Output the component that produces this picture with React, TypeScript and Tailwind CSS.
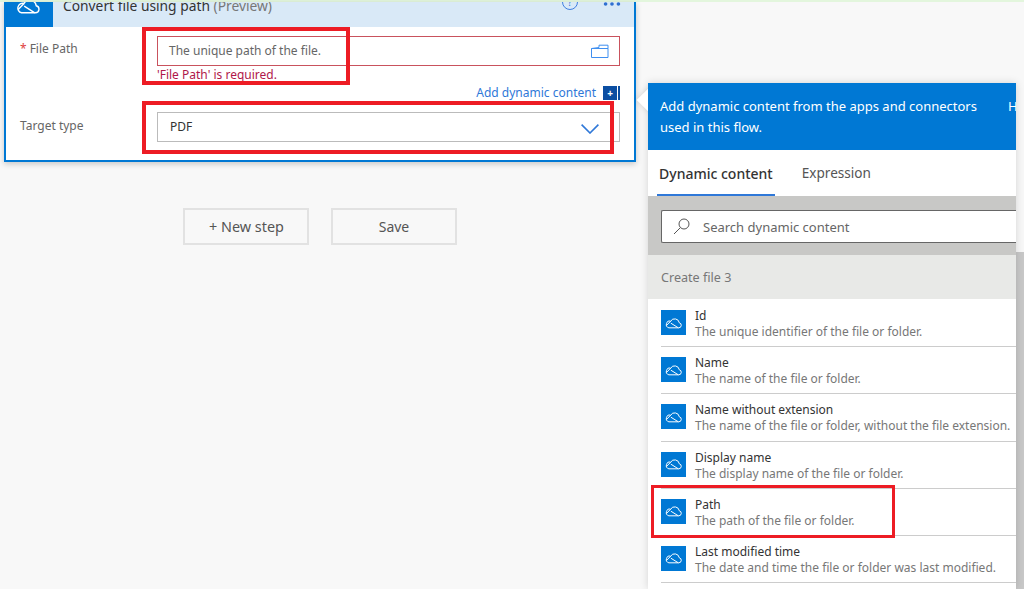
import React from "react";
import { Ellipsis } from "lucide-react";

const fields = [
	{ name: "Id", desc: "The unique identifier of the file or folder." },
	{ name: "Name", desc: "The name of the file or folder." },
	{ name: "Name without extension", desc: "The name of the file or folder, without the file extension." },
	{ name: "Display name", desc: "The display name of the file or folder." },
	{ name: "Path", desc: "The path of the file or folder." },
	{ name: "Last modified time", desc: "The date and time the file or folder was last modified." },
];

const CloudIcon: React.FC<{ className?: string }> = ({ className }) => (
	<svg viewBox="0 0 24 16" fill="none" stroke="white" strokeWidth="1.4" className={className}>
		<path d="M5.5 14.8h13.8a3.6 3.6 0 0 0 .9-7.1A6.6 6.6 0 0 0 8 5.4a4.8 4.8 0 0 0-2.5 9.4z" />
		<path d="M2.2 11.4 8 5.4M8.2 8.2l10.6 6.6" />
	</svg>
);

const FolderIcon = () => (
	<svg viewBox="0 0 18 14" fill="none" stroke="#3f8ff0" strokeWidth="1" className="h-[14px] w-[18px]">
		<path d="M.5 4.5h16.5v9H.5zM.5 4.5 8 3.5V1.2h9v3.3" />
	</svg>
);

const App: React.FC = () => {
	return (
		<div className="relative flex h-[589px] w-[1024px] flex-col overflow-hidden bg-[#f8f8f8] font-['Noto_Sans',sans-serif] text-[12px] text-[#333]">
			<div className="h-[2px] bg-[#e3f6dd]" />

			<div className="flex flex-1">
				{/* Flow canvas */}
				<div className="w-[648px] pl-[4px]">
					<div className="h-[160px] w-[632px] overflow-hidden border-x-2 border-b-2 border-[#0078d4] bg-white shadow-[0_2px_6px_rgba(0,0,0,0.2)]">
						<div className="flex h-[25px] items-start overflow-hidden bg-[#d9e9f7]">
							<div className="flex h-[25px] w-[47px] shrink-0 items-start justify-center bg-[#0078d4] pr-[4px]">
								<CloudIcon className="-mt-[4px] h-[16px] w-[24px]" />
							</div>
							<div className="-mt-[6px] ml-[10px] flex-1 whitespace-nowrap text-[13.8px] leading-[20px] text-[#333]">
								Convert file using path <span className="text-[#777]">(Preview)</span>
							</div>
							<div className="-mt-[8px] mr-[10px] flex h-[16px] w-[16px] items-center justify-center rounded-full border border-[#3f7fe0] text-[10px] text-[#3f7fe0]">
								?
							</div>
							<Ellipsis className="-mt-[9px] mr-[10px] ml-[12px] h-[22px] w-[24px] text-[#2f6fd0]" />
						</div>

						<div className="flex pt-[9px] pr-[14px]">
							<div className="w-[151px] pt-[4px] pl-[14px] text-[#666]">
								<span className="mr-[3px] text-[#e04040]">*</span>File Path
							</div>
							<div className="flex-1">
								<div className="flex h-[30px] items-center justify-between border border-[#c9525d] pr-[10px] pl-[11px] text-[#666]">
									The unique path of the file.
									<FolderIcon />
								</div>
								<div className="leading-[17px] text-[#b0174a]">'File Path' is required.</div>
								<div className="mt-[2px] flex h-[16px] items-center justify-end text-[#2f78d8]">
									Add dynamic content
									<span className="ml-[7px] flex h-[14px] w-[14px] items-center justify-center bg-[#0b4ea2] text-[10px] font-bold text-white">+</span>
									<span className="ml-[1px] h-[14px] w-[2px] bg-[#0b4ea2]" />
								</div>
							</div>
						</div>

						<div className="mt-[11px] flex pr-[14px]">
							<div className="w-[151px] pt-[5px] pl-[14px] text-[#666]">Target type</div>
							<div className="flex h-[30px] flex-1 items-center justify-between border border-[#bbb] pr-[20px] pl-[12px] text-[#333]">
								PDF
								<svg viewBox="0 0 18 10" fill="none" stroke="#2f78d8" strokeWidth="1.6" className="mt-[3px] h-[10px] w-[18px]">
									<path d="M.6.6 9 9l8.4-8.4" />
								</svg>
							</div>
						</div>
					</div>

					<div className="mt-[46px] ml-[179px] flex gap-[22px] text-[14px] text-[#555]">
						<div className="flex h-[37px] w-[126px] items-center justify-center border-2 border-[#e2e2e2] pl-[1px] text-[14.4px]">+ New step</div>
						<div className="flex h-[37px] w-[126px] items-center justify-center border-2 border-[#e2e2e2]">Save</div>
					</div>
				</div>

				{/* Dynamic content panel */}
				<div className="relative mt-[81px] w-[368px] bg-white shadow-[0_0_8px_rgba(0,0,0,0.15)]">
					<div className="absolute top-[9px] -left-[8px] h-[16px] w-[16px] rotate-45 bg-white shadow-[0_0_6px_rgba(0,0,0,0.15)]" />
					<div className="relative flex h-[67px] overflow-hidden bg-[#0078d4] pt-[13px] pl-[12px] text-[13px] leading-[21px] text-white">
						<div className="w-[348px] shrink-0 pr-[18px]">Add dynamic content from the apps and connectors used in this flow.</div>
						<div>Hide</div>
					</div>
					<div className="flex h-[46px] items-center gap-[27px] pl-[9px] text-[14px]">
						<div className="flex h-full items-center border-b-2 border-[#2f78d8] px-[2px] pt-[2px] font-medium text-[#333]">Dynamic content</div>
						<div className="pt-[1px] text-[13.6px] text-[#555]">Expression</div>
					</div>
					<div className="h-[59px] bg-[#c8c8c6] pt-[14px] pl-[13px]">
						<div className="flex h-[33px] items-center rounded-l-[2px] border border-r-0 border-[#666] bg-white pl-[11px] text-[13px] text-[#666]">
							<svg viewBox="0 0 17 17" fill="none" stroke="#555" strokeWidth="1" className="mr-[13px] h-[17px] w-[17px]">
								<circle cx="11" cy="6" r="5" />
								<path d="M7.4 9.6 1 16" />
							</svg>
							<span className="pt-[2px]">Search dynamic content</span>
						</div>
					</div>
					<div className="flex h-[44px] items-center bg-[#e8e9e7] pt-[2px] pl-[13px] text-[12.6px] text-[#777]">Create file 3</div>
					<div className="pt-[1px] pl-[13px]">
						{fields.map((field) => (
							<div key={field.name} className="flex h-[47.2px] border-b border-[#ccc] pt-[10px]">
								<div className="flex h-[25px] w-[25px] shrink-0 items-center justify-center bg-[#0078d4]">
									<CloudIcon className="h-[12px] w-[17px]" />
								</div>
								<div className="ml-[9px] whitespace-nowrap">
									<div className="-mt-[2px] leading-[16px] text-[#333]">{field.name}</div>
									<div className="leading-[16px] text-[#777]">{field.desc}</div>
								</div>
							</div>
						))}
					</div>
				</div>

				{/* Scrollbar */}
				<div className="flex w-[8px] flex-col pt-[250px]">
					<div className="flex-1 bg-[#c8c8c8]" />
				</div>
			</div>

			{/* Red annotation boxes */}
			<div className="absolute top-[27px] left-[142px] h-[58px] w-[208px] border-4 border-[#ed1c24]" />
			<div className="absolute top-[101px] left-[142px] h-[53px] w-[472px] border-4 border-[#ed1c24]" />
			<div className="absolute top-[485px] left-[651px] h-[53px] w-[244px] border-[3px] border-[#ed1c24]" />
		</div>
	);
};

export default App;
